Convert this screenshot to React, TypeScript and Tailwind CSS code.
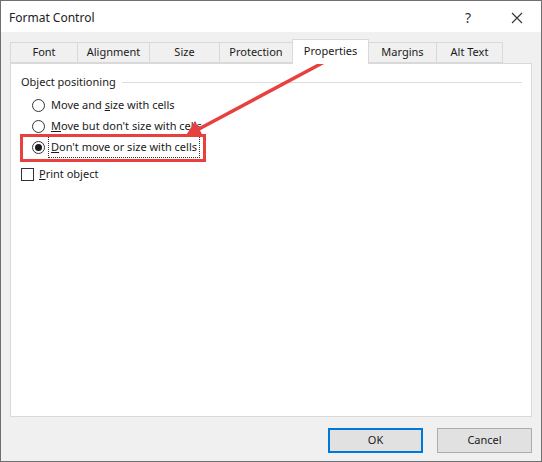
import React from "react";

function Radio({ checked }: { checked?: boolean }) {
  return (
    <span className="flex h-[13px] w-[13px] shrink-0 items-center justify-center rounded-full border border-[#333333] bg-white">
      {checked && <span className="h-[7px] w-[7px] rounded-full bg-[#1a1a1a]" />}
    </span>
  );
}

const tabs = [
  { label: "Font", w: "w-[68px]" },
  { label: "Alignment", w: "w-[73px]" },
  { label: "Size", w: "w-[71px]" },
  { label: "Protection", w: "w-[74px]" },
  { label: "Properties", w: "w-[77px]" },
  { label: "Margins", w: "w-[69px]" },
  { label: "Alt Text", w: "w-[67px]" },
];

export default function App() {
  return (
    <div
      className="relative flex h-[462px] w-[542px] flex-col overflow-hidden border border-[#6f6f6f] bg-[#f0f0f0] text-[11px] text-[#1a1a1a]"
      style={{ fontFamily: '"Noto Sans", "Liberation Sans", sans-serif' }}
    >
      {/* title bar */}
      <div className="flex h-[31px] shrink-0 items-center bg-white pl-[8px] pt-[2px]">
        <span className="text-[12px] text-[#222]">Format Control</span>
        <span className="ml-auto mr-[40px] text-[14px] text-[#333]">?</span>
        <svg width="12" height="12" viewBox="0 0 12 12" className="mr-[18px]">
          <path d="M1 1 L11 11 M11 1 L1 11" stroke="#333" strokeWidth="1.1" />
        </svg>
      </div>

      <div className="flex flex-1 flex-col px-[9px] pt-[7px]">
        {/* tabs */}
        <div className="relative z-10 flex h-[24px] items-end">
          {tabs.map((t, i) =>
            t.label === "Properties" ? (
              <div
                key={t.label}
                className={`${t.w} -mb-px -ml-px flex h-[25px] shrink-0 items-center justify-center border border-b-0 border-[#d9d9d9] bg-white pb-[1px]`}
              >
                {t.label}
              </div>
            ) : (
              <div
                key={t.label}
                className={`${t.w} flex h-[21px] shrink-0 items-center justify-center border border-[#d9d9d9] ${i > 0 ? "-ml-px" : ""}`}
              >
                {t.label}
              </div>
            )
          )}
        </div>

        {/* panel */}
        <div className="h-[354px] w-[522px] border border-[#d9d9d9] bg-white pl-[10px] pr-[9px] pt-[10px]">
          <div className="flex items-center">
            <span>Object positioning</span>
            <span className="ml-[6px] h-px flex-1 bg-[#dcdcdc]" />
          </div>
          <div className="mt-[8px] flex flex-col gap-[8px] pl-[11px]">
            <label className="flex h-[13px] items-center gap-[6px]">
              <Radio />
              <span>
                Move and <u>s</u>ize with cells
              </span>
            </label>
            <label className="flex h-[13px] items-center gap-[6px]">
              <Radio />
              <span>
                <u>M</u>ove but don't size with cells
              </span>
            </label>
            <label className="flex h-[13px] items-center gap-[6px]">
              <Radio checked />
              <span className="outline outline-1 outline-dotted outline-[#333] outline-offset-[2px]">
                <u>D</u>on't move or size with cells
              </span>
            </label>
          </div>
          <label className="mt-[14px] flex h-[13px] items-center gap-[5px]">
            <span className="h-[13px] w-[13px] border border-[#333] bg-white" />
            <span>
              <u>P</u>rint object
            </span>
          </label>
        </div>

        {/* buttons */}
        <div className="mt-[11px] flex justify-end gap-[14px]">
          <button className="h-[25px] w-[95px] border-2 border-[#0078d7] bg-[#e1e1e1]">OK</button>
          <button className="h-[25px] w-[95px] border border-[#adadad] bg-[#e1e1e1]">Cancel</button>
        </div>
      </div>

      {/* annotation: red box */}
      <div className="absolute left-[19px] top-[133px] h-[28px] w-[186px] border-[3px] border-[#e8403f]" />

      {/* annotation: arrow */}
      <svg className="pointer-events-none absolute left-0 top-0" width="542" height="462">
        <line x1="327" y1="59" x2="196" y2="129" stroke="#e8403f" strokeWidth="3.5" strokeLinecap="round" />
        <polygon points="184,136 202,135 194,120" fill="#e8403f" />
      </svg>
    </div>
  );
}
